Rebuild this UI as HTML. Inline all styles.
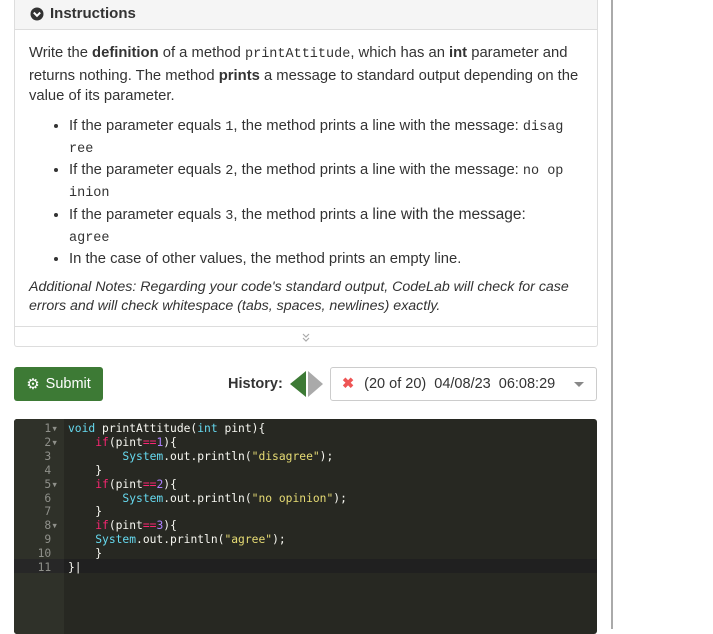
<!DOCTYPE html>
<html><head><meta charset="utf-8"><style>
body{margin:0;width:713px;height:629px;overflow:hidden;background:#fff;font-family:"Liberation Sans",Arial,sans-serif;color:#333;position:relative}
.vline{position:absolute;left:611px;top:0;width:2px;height:629px;background:#aaa}
.panel{position:absolute;left:14px;top:-1px;width:582px;height:347px;border:1px solid #ddd;border-top:none;border-radius:0 0 3px 3px}
.hd{height:31px;background:#f5f5f5;border-bottom:1px solid #ddd;box-sizing:border-box;padding:0 0 1px 15px;font-weight:bold;font-size:15px;color:#333;display:flex;align-items:center}
.body{padding:13px 10px 0 14px;font-size:14.8px;line-height:20.5px}
.body p{margin:0}
code{font-family:"Liberation Mono",monospace;font-size:13.5px;color:#333}
ul{margin:9px 0 0;padding-left:40px}
li{line-height:20.3px}
.notes{font-style:italic;font-size:14.2px;line-height:19.5px;margin-top:8px!important;color:#333}
.ft{position:absolute;left:0;right:0;top:327px;height:20px;border-top:1px solid #ddd}
.btn{position:absolute;left:14px;top:367px;width:89px;height:34px;background:#3d7a35;border-radius:3px;color:#fff;font-size:14.5px;display:flex;align-items:center;justify-content:center;gap:6px}
.hist{position:absolute;left:228px;top:376px;font-weight:bold;font-size:14.5px}
.sel{position:absolute;left:330px;top:367px;width:267px;height:34px;border:1px solid #ccc;border-radius:3px;box-sizing:border-box;font-size:14.5px;display:flex;align-items:center;padding-left:11px}
.ed{position:absolute;left:14px;top:419px;width:583px;height:215px;background:#272822;border-radius:3px;overflow:hidden}
.gut{position:absolute;left:0;top:0;width:50px;height:100%;background:#2f3129}
.cl{position:absolute;left:0;top:140px;width:583px;height:14px;background:#202020}
.cl .g{position:absolute;left:0;top:0;width:50px;height:14px;background:#272727}
pre{position:absolute;margin:0;top:3px;font-family:"DejaVu Sans Mono","Liberation Mono",monospace;font-size:11.3px;line-height:13.9px}
.nums{left:0;width:44px;text-align:right;color:#8f908a}
.code{left:54px;color:#f8f8f2}
.k{color:#f92672}.t{color:#66d9ef}.n{color:#ae81ff}.s{color:#e6db74}
</style></head><body>
<div class="vline"></div>
<div class="panel">
<div class="hd"><svg width="14" height="14" viewBox="0 0 14 14" style="margin-right:6px"><circle cx="7" cy="7" r="6.5" fill="#333"/><path d="M3.8 5.6L7 8.8 10.2 5.6" stroke="#fff" stroke-width="2" fill="none"/></svg>Instructions</div>
<div class="body">
<p>Write the <b>definition</b> of a method <code>printAttitude</code>, which has an <b>int</b> parameter and returns nothing. The method <b>prints</b> a message to standard output depending on the value of its parameter.</p>
<ul>
<li>If the parameter equals <code>1</code>, the method prints a line with the message: <code>disag<br>ree</code></li>
<li>If the parameter equals <code>2</code>, the method prints a line with the message: <code>no op<br>inion</code></li>
<li>If the parameter equals <code>3</code>, the method prints a <span style="font-size:15.5px">line with the message:</span><br><code>agree</code></li>
<li>In the case of other values, the method prints an empty line.</li>
</ul>
<p class="notes">Additional Notes: Regarding your code's standard output, CodeLab will check for case errors and will check whitespace (tabs, spaces, newlines) exactly.</p>
</div>
<div class="ft"><svg style="position:absolute;left:287px;top:6px" width="8" height="9" viewBox="0 0 8 9"><path d="M1 1L4 4 7 1M1 5L4 8 7 5" stroke="#aaa" stroke-width="1.2" fill="none"/></svg></div>
</div>
<div class="btn"><span style="font-size:15px">&#9881;</span>Submit</div>
<div class="hist">History:</div>
<svg style="position:absolute;left:290px;top:371px" width="34" height="26" viewBox="0 0 34 26"><path d="M0 13L16 0V26Z" fill="#3d7a35"/><path d="M18 0L33 13 18 26Z" fill="#aaa"/></svg>
<div class="sel"><span style="color:#e55;font-weight:bold;margin-right:10px">&#10006;</span>(20 of 20)&nbsp; 04/08/23 &nbsp;06:08:29<span style="position:absolute;right:12px;top:14px;border:5px solid transparent;border-top-color:#888"></span></div>
<div class="ed"><div class="gut"></div><div class="cl"><div class="g"></div></div>
<pre class="nums">1▾
2▾
3 
4 
5▾
6 
7 
8▾
9 
10 
11 </pre>
<pre class="code"><span class="t">void</span> printAttitude(<span class="t">int</span> pint){
    <span class="k">if</span>(pint<span class="k">==</span><span class="n">1</span>){
        <span class="t">System</span>.out.println(<span class="s">"disagree"</span>);
    }
    <span class="k">if</span>(pint<span class="k">==</span><span class="n">2</span>){
        <span class="t">System</span>.out.println(<span class="s">"no opinion"</span>);
    }
    <span class="k">if</span>(pint<span class="k">==</span><span class="n">3</span>){
    <span class="t">System</span>.out.println(<span class="s">"agree"</span>);
    }
}|</pre>
</div>
</body></html>
